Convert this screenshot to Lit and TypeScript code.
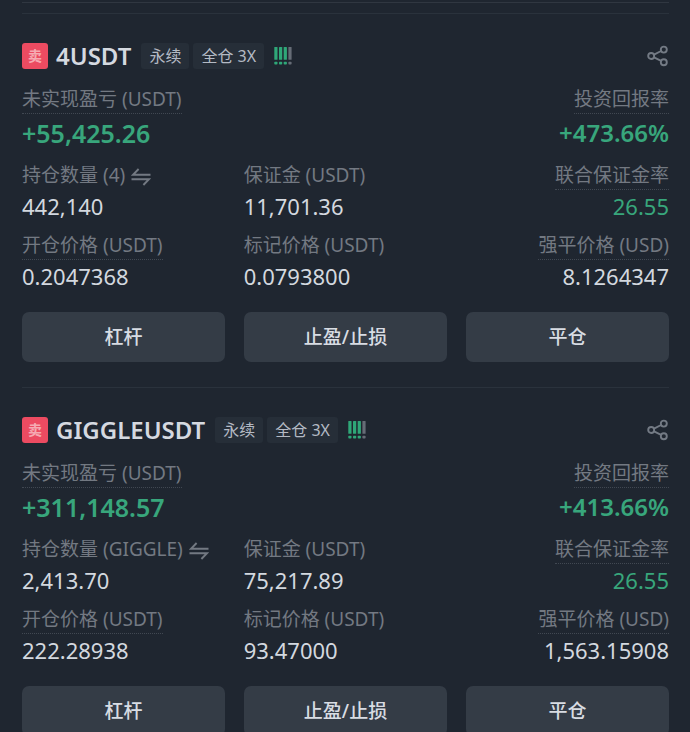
import { LitElement, html, css, svg, nothing } from "lit";
import { customElement, property } from "lit/decorators.js";

interface Field {
  label: string;
  value: string;
  hint?: boolean;
  up?: boolean;
  swap?: boolean;
}

interface Position {
  symbol: string;
  leverage: string;
  pnl: string;
  roi: string;
  fields: Field[];
}

const positions: Position[] = [
  {
    symbol: "4USDT",
    leverage: "全仓 3X",
    pnl: "+55,425.26",
    roi: "+473.66%",
    fields: [
      { label: "持仓数量 (4)", value: "442,140", swap: true },
      { label: "保证金 (USDT)", value: "11,701.36" },
      { label: "联合保证金率", value: "26.55", hint: true, up: true },
      { label: "开仓价格 (USDT)", value: "0.2047368", hint: true },
      { label: "标记价格 (USDT)", value: "0.0793800" },
      { label: "强平价格 (USD)", value: "8.1264347", hint: true },
    ],
  },
  {
    symbol: "GIGGLEUSDT",
    leverage: "全仓 3X",
    pnl: "+311,148.57",
    roi: "+413.66%",
    fields: [
      { label: "持仓数量 (GIGGLE)", value: "2,413.70", swap: true },
      { label: "保证金 (USDT)", value: "75,217.89" },
      { label: "联合保证金率", value: "26.55", hint: true, up: true },
      { label: "开仓价格 (USDT)", value: "222.28938", hint: true },
      { label: "标记价格 (USDT)", value: "93.47000" },
      { label: "强平价格 (USD)", value: "1,563.15908", hint: true },
    ],
  },
];

const shareIcon = svg`<svg width="22" height="22" viewBox="0 0 22 22" fill="none" stroke="currentColor" stroke-width="1.9" aria-hidden="true">
  <circle cx="4.2" cy="11" r="3"/><circle cx="16.8" cy="4.6" r="3"/><circle cx="16.8" cy="17.3" r="3"/>
  <path d="M7 9.6 14.1 6M7 12.4 14.1 15.9"/>
</svg>`;

const swapIcon = svg`<svg width="20" height="20" viewBox="0 0 20 20" fill="none" stroke="currentColor" stroke-width="1.9" aria-hidden="true">
  <path d="M19.5 8.8H2L7.6 3M.5 13.2H18L12.4 19"/>
</svg>`;

const riskIcon = svg`<svg width="18" height="18" viewBox="0 0 18 18" role="img" aria-label="ADL">
  ${[0, 1, 2, 3].map(
    (i) => svg`<g fill=${i < 3 ? "#2fa778" : "#666c76"}>
      <rect x=${i * 4.7 + 0.3} y="0" width="3.2" height="12.8" rx=".6"/>
      <rect x=${i * 4.7 + 0.3} y="14.8" width="3.2" height="2.8" rx=".8"/>
    </g>`
  )}
</svg>`;

@customElement("position-card")
export class PositionCard extends LitElement {
  @property({ attribute: false }) position!: Position;

  static styles = css`
    :host {
      display: block;
      padding: 28px 0 25px;
      border-bottom: 1px solid #2a323c;
    }
    button {
      font: inherit;
      border: 0;
      padding: 0;
      cursor: pointer;
    }
    svg {
      display: block;
    }
    .head {
      display: flex;
      align-items: center;
      height: 28px;
    }
    .side {
      display: grid;
      place-items: center;
      width: 26px;
      height: 26px;
      border-radius: 3px;
      background: #ec4b61;
      color: #f5aab2;
      font-size: 14px;
      line-height: 20px;
      font-weight: 700;
    }
    .symbol {
      margin: 0 10px 0 8px;
      font-size: 24px;
      line-height: 28px;
      font-weight: 600;
      color: #d5d9e0;
    }
    .tag {
      margin-right: 4px;
      padding: 0 8px;
      border-radius: 3px;
      background: #262e38;
      color: #b4bac4;
      font-size: 16px;
      line-height: 26px;
    }
    .risk {
      margin-left: 6px;
    }
    .share {
      margin-left: auto;
      background: none;
      color: #737a84;
    }
    dl,
    dd {
      margin: 0;
    }
    .summary {
      display: flex;
      justify-content: space-between;
      margin-top: 16px;
    }
    .grid {
      display: grid;
      grid-template-columns: repeat(3, 1fr);
      gap: 10px 18px;
      margin-top: 13px;
    }
    .end {
      text-align: right;
    }
    dt {
      display: inline-flex;
      align-items: center;
      gap: 6px;
      box-sizing: border-box;
      height: 28px;
      border-bottom: 1px dotted transparent;
      color: #737982;
      font-size: 19px;
      line-height: 27px;
      white-space: nowrap;
    }
    dt.hint {
      border-color: #414852;
    }
    dd {
      font-size: 22px;
      line-height: 32px;
      color: #d3d8df;
    }
    .up {
      color: #38a67c;
    }
    .big {
      margin-top: 3px;
      font-size: 25px;
      font-weight: 600;
    }
    .end .big {
      font-size: 24px;
    }
    .swap {
      background: none;
      color: inherit;
    }
    .actions {
      display: grid;
      grid-template-columns: repeat(3, 1fr);
      gap: 19px;
      margin-top: 20px;
    }
    .action {
      height: 50px;
      border-radius: 7px;
      background: #343c46;
      color: #d8dce3;
      font-size: 19px;
      line-height: 28px;
      font-weight: 500;
    }
  `;

  render() {
    const p = this.position;
    return html`
      <div class="head">
        <span class="side">卖</span>
        <span class="symbol">${p.symbol}</span>
        <span class="tag">永续</span>
        <span class="tag">${p.leverage}</span>
        <span class="risk">${riskIcon}</span>
        <button class="share" aria-label="分享">${shareIcon}</button>
      </div>
      <dl class="summary">
        <div>
          <dt class="hint">未实现盈亏 (USDT)</dt>
          <dd class="big up">${p.pnl}</dd>
        </div>
        <div class="end">
          <dt class="hint">投资回报率</dt>
          <dd class="big up">${p.roi}</dd>
        </div>
      </dl>
      <dl class="grid">
        ${p.fields.map(
          (f, i) => html`<div class=${i % 3 === 2 ? "end" : "start"}>
            <dt class=${f.hint ? "hint" : "plain"}>
              ${f.label}${f.swap
                ? html`<button class="swap" aria-label="切换单位">${swapIcon}</button>`
                : nothing}
            </dt>
            <dd class=${f.up ? "up" : "plain"}>${f.value}</dd>
          </div>`
        )}
      </dl>
      <div class="actions">
        <button class="action">杠杆</button>
        <button class="action">止盈/止损</button>
        <button class="action">平仓</button>
      </div>
    `;
  }
}

@customElement("app-root")
export class AppRoot extends LitElement {
  static styles = css`
    :host {
      display: block;
      box-sizing: border-box;
      height: 100vh;
      overflow: hidden;
      padding: 2px 21px 0 22px;
      background: #1f2630;
      font-family: "Noto Sans", "Noto Sans CJK SC", sans-serif;
    }
    .divider {
      height: 10px;
      border-top: 1px solid #303741;
      border-bottom: 1px solid #2a323c;
    }
  `;

  render() {
    return html`
      <div class="divider"></div>
      ${positions.map((p) => html`<position-card .position=${p}></position-card>`)}
    `;
  }
}
